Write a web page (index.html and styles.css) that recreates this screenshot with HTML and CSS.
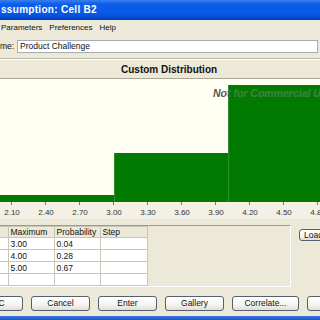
FILE: index.html
```html
<!DOCTYPE html>
<html>

<head>
  <meta charset="UTF-8">
  <title>Define Assumption: Cell B2</title>
  <link rel="stylesheet" href="styles.css">
</head>

<body>
  <div class="window">
    <div class="titlebar">ssumption: Cell B2</div>

    <div class="menubar">
      <span class="menu-item">Parameters</span>
      <span class="menu-item">Preferences</span>
      <span class="menu-item">Help</span>
    </div>

    <div class="namerow">
      <span class="name-label">me:</span>
      <div class="name-input">Product Challenge</div>
    </div>

    <div class="chart-title">Custom Distribution</div>

    <div class="chart">
      <div class="bar" style="width:114px; height:7px"></div>
      <div class="bar" style="width:114px; height:49px"></div>
      <div class="bar bar-last" style="width:92px; height:117px">
        <span class="watermark watermark-on-bar">Not for Commercial Use</span>
      </div>
      <span class="watermark">Not for Commercial Use</span>
    </div>

    <div class="axis">
      <span class="tick">2.10</span>
      <span class="tick">2.40</span>
      <span class="tick">2.70</span>
      <span class="tick">3.00</span>
      <span class="tick">3.30</span>
      <span class="tick">3.60</span>
      <span class="tick">3.90</span>
      <span class="tick">4.20</span>
      <span class="tick">4.50</span>
      <span class="tick">4.80</span>
    </div>

    <div class="lower">
      <div class="grid-box">
        <table class="grid">
          <tr class="grid-head">
            <td class="c0"></td>
            <td class="c1">Maximum</td>
            <td class="c2">Probability</td>
            <td class="c3">Step</td>
          </tr>
          <tr>
            <td class="c0"></td><td>3.00</td><td>0.04</td><td></td>
          </tr>
          <tr>
            <td class="c0"></td><td>4.00</td><td>0.28</td><td></td>
          </tr>
          <tr>
            <td class="c0"></td><td>5.00</td><td>0.67</td><td></td>
          </tr>
          <tr>
            <td class="c0"></td><td></td><td></td><td></td>
          </tr>
        </table>
      </div>
      <div class="side">
        <div class="btn btn-load">Load Data...</div>
      </div>
    </div>

    <div class="buttons">
      <div class="btn btn-first">C</div>
      <div class="btn">Cancel</div>
      <div class="btn">Enter</div>
      <div class="btn">Gallery</div>
      <div class="btn btn-wide">Correlate...</div>
      <div class="btn">Help</div>
    </div>
  </div>
  <div class="taskbar"></div>
</body>

</html>
```

FILE: styles.css
```css
body {
  margin: 0;
  width: 320px;
  height: 320px;
  overflow: hidden;
  background-color: #ece9d8;
  font-family: "Liberation Sans", Arial, sans-serif;
  font-size: 8.5px;
  color: #111;
}

.window {
  height: 316px;
  overflow: hidden;
}

.titlebar {
  height: 20px;
  box-sizing: border-box;
  padding: 4px 0 0 1px;
  color: #fff;
  font-size: 10px;
  font-weight: bold;
  letter-spacing: 0.3px;
  background: linear-gradient(#3a80f0, #0d5ee8 20%, #0658e6 70%, #0348c8 92%, #003aa8);
}

.menubar {
  height: 15px;
  display: flex;
  align-items: center;
  padding-left: 1px;
  gap: 7px;
  font-size: 8px;
}

.menu-item {
  display: inline-block;
}

.namerow {
  height: 24px;
  box-sizing: border-box;
  display: flex;
  align-items: center;
  padding-bottom: 1px;
  border-bottom: 1px solid #b9b6a6;
}

.name-label {
  width: 17px;
}

.name-input {
  width: 301px;
  height: 13px;
  box-sizing: border-box;
  border: 1px solid #a5acb5;
  background-color: #fff;
  padding-left: 2px;
  line-height: 11px;
}

.chart-title {
  height: 20px;
  box-sizing: border-box;
  border-top: 1px solid #fff;
  border-bottom: 1px solid #aaa795;
  padding: 4px 0 0 121px;
  font-size: 10px;
  font-weight: bold;
  color: #111;
}

.chart {
  position: relative;
  height: 123px;
  background-color: #fffff2;
  display: flex;
  align-items: flex-end;
}

.bar {
  position: relative;
  overflow: hidden;
  flex: none;
  background-color: #027a02;
  box-sizing: border-box;
  border-left: 1px solid #2f8f2f;
}

.bar:first-child {
  border-left: none;
}

.watermark {
  position: absolute;
  left: 213px;
  top: 8px;
  white-space: nowrap;
  font-size: 10.5px;
  font-style: italic;
  font-weight: bold;
  color: #555;
}

.watermark-on-bar {
  left: -16px;
  top: 2px;
  color: #2f8c2f;
  z-index: 1;
}

.axis {
  height: 17px;
  display: flex;
  margin-left: -5px;
  background-color: #f3f1e6;
  color: #333;
  font-size: 8px;
}

.tick {
  position: relative;
  flex: none;
  width: 34px;
  text-align: center;
  padding-top: 6px;
}

.tick::before {
  content: "";
  position: absolute;
  top: 0;
  left: 16px;
  width: 1px;
  height: 3px;
  background-color: #777;
}

.lower {
  display: flex;
  margin-top: 6px;
}

.grid-box {
  width: 291px;
  height: 62px;
  box-sizing: border-box;
  border-top: 1px solid #9d9a8a;
  border-right: 1px solid #fff;
  border-bottom: 1px solid #fff;
}

.grid {
  width: 147px;
  border-collapse: collapse;
  table-layout: fixed;
  font: inherit;
}

.grid td {
  height: 12px;
  box-sizing: border-box;
  padding: 0 0 0 2px;
  border: 1px solid #c9c6b8;
  background-color: #fff;
  line-height: 10px;
  white-space: nowrap;
  overflow: hidden;
}

.grid .grid-head td {
  height: 11px;
  background-color: #ece9d8;
}

.grid td.c0 {
  width: 8px;
  padding: 0;
  border-left: none;
}

.grid td.c1,
.grid td.c2 {
  width: 46px;
}

.grid td.c3 {
  width: 47px;
}

.side {
  flex: 1;
  padding: 4px 0 0 8px;
  overflow: hidden;
}

.btn {
  flex: none;
  width: 59px;
  height: 15px;
  box-sizing: border-box;
  border: 1px solid #55606e;
  border-radius: 3px;
  background: linear-gradient(#fff, #f5f4ef 60%, #e0ddd2);
  text-align: center;
  line-height: 13px;
  white-space: nowrap;
}

.btn-load {
  width: 50px;
  height: 12px;
  line-height: 10px;
  text-align: left;
  padding-left: 4px;
}

.buttons {
  display: flex;
  gap: 8px;
  margin-top: 9px;
}

.btn-first {
  width: 43px;
  margin-left: -20px;
}

.btn-wide {
  width: 67px;
}

.taskbar {
  height: 4px;
  background: linear-gradient(#3d77e0, #1b52c8);
}
```
